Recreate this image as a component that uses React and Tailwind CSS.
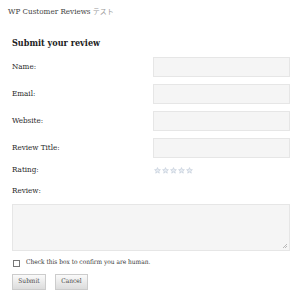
import React from 'react'

const serif = { fontFamily: '"DejaVu Serif", "Noto Sans CJK JP", serif', fontStretch: 'condensed' }

function Star() {
  return (
    <svg width="7" height="7" viewBox="0 0 24 24">
      <path
        d="M12 2l2.9 6.6 7.1.6-5.4 4.7 1.6 7.1L12 17.3 5.8 21l1.6-7.1L2 9.2l7.1-.6z"
        fill="#e8edf3"
        stroke="#b9c4d2"
        strokeWidth="1.8"
        strokeLinejoin="round"
      />
    </svg>
  )
}

function Field({ label }) {
  return (
    <div className="flex items-center justify-between h-[20px]">
      <span className="text-[8px] text-[#2a2a2a]">{label}</span>
      <div className="w-[137px] h-[20px] bg-[#f5f5f5] border border-[#e6e6e6]" />
    </div>
  )
}

export default function App() {
  return (
    <div className="w-[298px] h-[300px] bg-white relative" style={serif}>
      <div className="pl-[8px] pt-[6px] text-[8px] text-[#444] leading-[12px]">
        WP Customer Reviews <span className="text-[7px] text-[#999]">テスト</span>
      </div>
      <div className="pl-[12px] pr-[8px]">
        <h2 className="mt-[18px] text-[9px] font-bold text-[#222] leading-[14px]">Submit your review</h2>
        <div className="mt-[7px] flex flex-col gap-[7px]">
          <Field label="Name:" />
          <Field label="Email:" />
          <Field label="Website:" />
          <Field label="Review Title:" />
        </div>
        <div className="mt-[5px] flex items-center justify-between h-[14px]">
          <span className="text-[8px] text-[#2a2a2a]">Rating:</span>
          <div className="w-[137px] flex gap-[1px] pl-[1px]">
            <Star /><Star /><Star /><Star /><Star />
          </div>
        </div>
        <div className="mt-[8px] text-[8px] text-[#2a2a2a] leading-[12px]">Review:</div>
        <div className="mt-[7px] h-[47px] bg-[#f5f5f5] border border-[#e6e6e6] relative">
          <svg className="absolute right-[1px] bottom-[1px]" width="6" height="6" viewBox="0 0 6 6">
            <path d="M5 1L1 5M5 3L3 5" stroke="#aaa" strokeWidth="0.8" />
          </svg>
        </div>
        <div className="mt-[8px] flex items-center gap-[6px] h-[8px]">
          <div className="w-[7px] h-[7px] border border-[#777] bg-white ml-[1px]" />
          <span className="text-[6.5px] text-[#333]">Check this box to confirm you are human.</span>
        </div>
        <div className="mt-[7px] flex gap-[9px]">
          <button className="w-[34px] h-[16px] text-[6.5px] text-[#444] border border-[#ccc] bg-gradient-to-b from-[#fafafa] to-[#dcdcdc]" style={serif}>Submit</button>
          <button className="w-[33px] h-[16px] text-[6.5px] text-[#444] border border-[#ccc] bg-gradient-to-b from-[#fafafa] to-[#dcdcdc]" style={serif}>Cancel</button>
        </div>
      </div>
    </div>
  )
}
